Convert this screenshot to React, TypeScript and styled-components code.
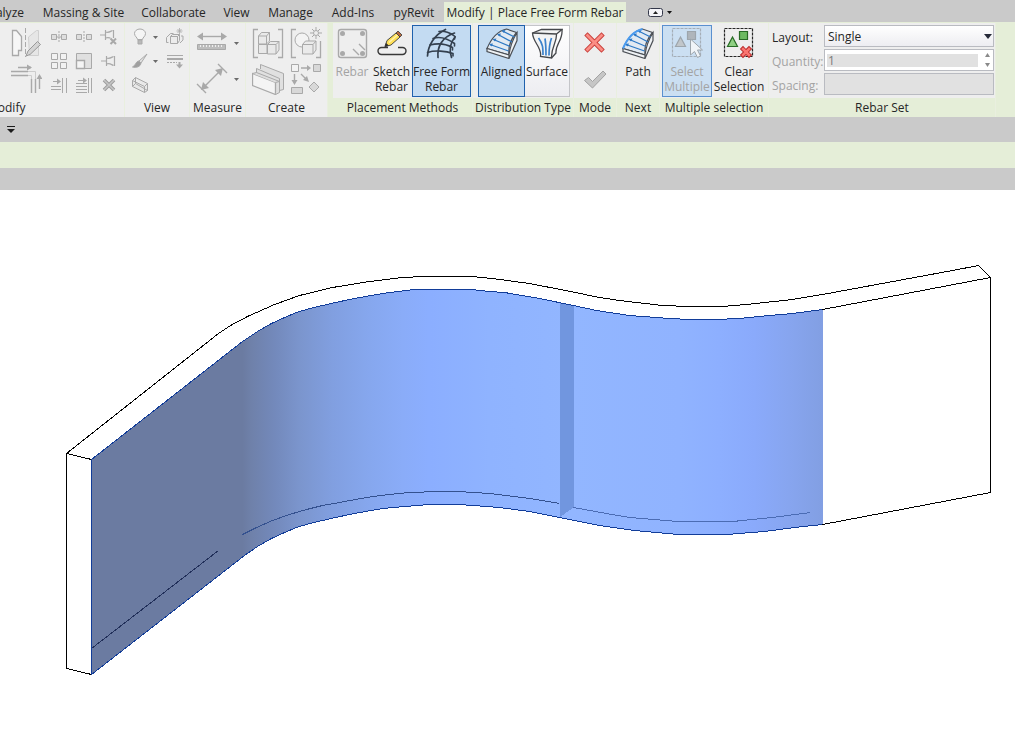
import React from "react";
import styled, { createGlobalStyle, css } from "styled-components";

const GlobalStyle = createGlobalStyle`
  *, *::before, *::after { box-sizing: border-box; }
  body {
    margin: 0;
    background: #ffffff;
    color: #262626;
    font: 12px/15px "Open Sans", "Noto Sans", sans-serif;
  }
  button, input, select { font: inherit; color: inherit; margin: 0; }
`;

const Page = styled.div`
  min-width: 1000px;
  overflow: hidden;
`;

/* ---------- tab strip ---------- */

const TabBar = styled.nav`
  display: flex;
  align-items: flex-end;
  height: 22px;
  background: #cacaca;
  overflow: hidden;
`;

const Tab = styled.button<{ $width: number; $active?: boolean; $clipped?: boolean }>`
  display: flex;
  flex: none;
  align-items: center;
  justify-content: ${(p) => (p.$clipped ? "flex-end" : "center")};
  width: ${(p) => p.$width}px;
  height: 20px;
  padding: ${(p) => (p.$clipped ? "0 10px 0 0" : "0")};
  border: 0;
  background: ${(p) => (p.$active ? "#e5eed8" : "transparent")};
  white-space: nowrap;
`;

const RibbonToggle = styled.button`
  display: flex;
  align-items: center;
  gap: 4px;
  height: 20px;
  margin-left: 22px;
  padding: 0;
  border: 0;
  background: transparent;
`;

/* ---------- ribbon ---------- */

const Ribbon = styled.div`
  display: flex;
  height: 95px;
  padding-top: 1px;
  background: #e5eed8;
  overflow: hidden;
`;

const Panel = styled.section<{ $width: number; $plain?: boolean }>`
  display: flex;
  flex: none;
  flex-direction: column;
  width: ${(p) => p.$width}px;
  border-right: 1px solid #e9efdf;
  background: ${(p) => (p.$plain ? "#eeeeee" : "transparent")};
  overflow: hidden;
`;

const PanelBody = styled.div<{ $pad?: number }>`
  display: flex;
  gap: 4px;
  height: 75px;
  padding: 2px 0 0 ${(p) => p.$pad ?? 0}px;
  background: #eeeeee;
`;

const ButtonRow = styled.div`
  display: flex;
`;

const PanelTitle = styled.h2<{ $clipped?: boolean }>`
  display: flex;
  justify-content: ${(p) => (p.$clipped ? "flex-start" : "center")};
  margin: 0;
  padding-top: 1px;
  font-size: 12px;
  font-weight: 400;
  line-height: 17px;
  white-space: nowrap;
  ${(p) => p.$clipped && css`margin-left: -13px;`}
`;

const Spacer = styled.div`
  flex: none;
  width: 5px;
`;

const IconGrid = styled.div<{ $cols: string; $row: number; $gap?: number }>`
  display: grid;
  grid-template-columns: ${(p) => p.$cols};
  grid-auto-rows: ${(p) => p.$row}px;
  column-gap: ${(p) => p.$gap ?? 0}px;
  height: 72px;
`;

const IconButton = styled.button`
  display: flex;
  align-items: center;
  justify-content: center;
  padding: 0;
  border: 0;
  background: transparent;
  &:disabled { color: #a9a9a9; }
`;

type Tone = "selected" | "raised" | "held" | "flat";

const tones = {
  flat: css`border-color: transparent;`,
  selected: css`border-color: #1f61ad; background: #c3dbf2;`,
  raised: css`border-color: #c4c5c9; background: linear-gradient(#ffffff, #ededf1); border-left: 0;`,
  held: css`border-color: #5a90cf; background: #cbdff2;`,
};

const BigButton = styled.button<{ $width: number; $tone?: Tone }>`
  display: flex;
  flex: none;
  flex-direction: column;
  align-items: center;
  width: ${(p) => p.$width}px;
  height: 72px;
  padding: 1px 0 0;
  border: 1px solid;
  background: transparent;
  color: #262626;
  ${(p) => tones[p.$tone ?? "flat"]}
  &:disabled { color: #a3a3a3; }
  svg { flex: none; margin-bottom: 5px; }
`;

const ButtonLabel = styled.span`
  display: block;
  white-space: pre;
`;

/* ---------- rebar set form ---------- */

const Form = styled.form`
  display: grid;
  grid-template-columns: 52px 170px;
  grid-auto-rows: 22px;
  row-gap: 2px;
  align-items: center;
`;

const FieldLabel = styled.label<{ $off?: boolean }>`
  padding-top: 2px;
  color: ${(p) => (p.$off ? "#a3a3a3" : "#262626")};
`;

const SelectBox = styled.span`
  display: grid;
  align-items: center;
  height: 22px;
  border: 1px solid #b9bbc1;
  background: linear-gradient(#ffffff, #ededf1);
  > * { grid-area: 1 / 1; }
  > svg { justify-self: end; margin-right: 1px; pointer-events: none; }
`;

const Select = styled.select`
  width: 100%;
  height: 20px;
  padding: 0 0 0 3px;
  border: 0;
  background: transparent;
  appearance: none;
`;

const NumberBox = styled.span`
  display: flex;
  align-items: center;
  height: 22px;
  padding-left: 2px;
  border: 1px solid #b9bbc1;
  background: #ffffff;
`;

const NumberInput = styled.input`
  flex: 1;
  min-width: 0;
  height: 13px;
  padding: 0 1px;
  border: 0;
  background: #e1e1e1;
  color: #7b7b7b;
`;

const Spinner = styled.span`
  display: flex;
  flex-direction: column;
  align-items: center;
  width: 15px;
  padding-left: 3px;
  button { display: flex; padding: 3px 2px; border: 0; background: transparent; }
`;

const SpacingInput = styled.input`
  width: 100%;
  height: 22px;
  border: 1px solid #b9bbc1;
  background: #e1e1e1;
`;

/* ---------- bars below the ribbon ---------- */

const QuickBar = styled.div`
  display: flex;
  align-items: center;
  height: 25px;
  padding-left: 5px;
  background: #cacaca;
`;

const OptionsBar = styled.div`
  height: 26px;
  background: #e5eed8;
`;

const ViewBar = styled.div`
  height: 22px;
  background: #cacaca;
`;

const Viewport = styled.main`
  svg { display: block; width: 100%; height: auto; }
`;

/* ---------- icons ---------- */

const Small: React.FC<{ children: React.ReactNode }> = ({ children }) => (
  <svg width="18" height="18" viewBox="0 0 18 18" fill="none" stroke="#a9a9a9">{children}</svg>
);
const Large: React.FC<{ children: React.ReactNode; stroke?: string }> = ({ children, stroke = "#a9a9a9" }) => (
  <svg width="32" height="32" viewBox="0 0 32 32" fill="none" stroke={stroke}>{children}</svg>
);
const Caret: React.FC<{ color?: string; w?: number }> = ({ color = "#6b6b6b", w = 5 }) => (
  <svg width={w} height={w === 5 ? 3 : 5} viewBox="0 0 5 3"><path d="M0 0h5L2.5 3z" fill={color} /></svg>
);

const MirrorIcon = () => (
  <Large>
    <path d="M2.500 3.500h4l5 6v14h-3v5h-6z" fill="#f6f6f6" strokeWidth="1.300" />
    <path d="M15.500 1v29" strokeDasharray="5 2" />
    <path d="M18.500 10l8-6.500h2v25h-9z" fill="#e6e6e6" stroke="#cfcfcf" />
    <path d="M16 29l2-5L27.500 14.500l3 3L20 27.500z" fill="#d4d4d4" stroke="#989898" />
  </Large>
);
const TrimIcon = () => (
  <Large>
    <path d="M1 8.500h17M1 12.500h17M21.500 16v14M25.500 16v14" strokeWidth="1.400" />
    <path d="M18 8.500h7.500V16M18 12.500h3.500V16" stroke="#cccccc" />
    <path d="M8 4.500h13M29.500 26V13" strokeWidth="1.400" />
    <path d="M17 1.500l5 3-5 3zM26.500 16l3-5 3 5z" fill="#a9a9a9" stroke="none" />
  </Large>
);
const SplitIcon = () => (
  <Small><path d="M1.500 6.500h5v5h-5zM11.500 6.500h5v5h-5z" fill="#dedede" /><path d="M6 9h6" /><path d="M9 3v12" strokeDasharray="2 1" /></Small>
);
const SplitGapIcon = () => (
  <Small><path d="M1.500 6.500h5v5h-5zM11.500 6.500h5v5h-5z" fill="#dedede" /><path d="M9 3v12" strokeDasharray="2 1" /></Small>
);
const PinIcon = () => (
  <Small><path d="M1 9h5M6.500 4v10M6.500 6c3 1 4 0 7-1.500M6.500 12c3-1 4 0 7 1.500M14.500 4v10" strokeWidth="1.200" /></Small>
);
const UnpinIcon = () => (
  <Small>
    <path d="M0 7h5M5.500 2v10M5.500 4c3 1 4 0 7-1.500M5.500 10c3-1 4 0 5 0M13.500 2v8" strokeWidth="1.200" />
    <path d="M10.500 10.500l5.500 5.500M16 10.500l-5.500 5.500" strokeWidth="2" />
  </Small>
);
const ArrayIcon = () => (
  <Small><path d="M1.500 1.500h6v6h-6zM10.500 1.500h6v6h-6zM1.500 10.500h6v6h-6zM10.500 10.500h6v6h-6z" fill="#f2f2f2" /></Small>
);
const ScaleIcon = () => (
  <Small><path d="M1.500 1.500h15v15h-15z" fill="#e0e0e0" /><path d="M1.500 8.500h8v8h-8z" fill="#f5f5f5" strokeWidth="1.400" /></Small>
);
const ExtendIcon = () => (
  <Small><path d="M1 10.500h10M1 13.500h10M12.500 2v15M16.500 2v15" /><path d="M3 5.500h6" /><path d="M7 2.500l4 3-4 3z" fill="#a9a9a9" stroke="none" /></Small>
);
const ExtendMultiIcon = () => (
  <Small><path d="M1 7.500h11M1 10.500h11M1 13.500h11M1 16.500h11M13.500 2v15M16.500 2v15" /><path d="M3 4.500h6" /><path d="M8 1.500l4 3-4 3z" fill="#a9a9a9" stroke="none" /></Small>
);
const DeleteIcon = () => (
  <Small><path d="M4 4l10 10M14 4L4 14" stroke="#9c9c9c" strokeWidth="3.600" /><path d="M4 4l10 10M14 4L4 14" stroke="#c6c6c6" strokeWidth="1.600" /></Small>
);
const BulbIcon = () => (
  <Small><path d="M6.500 11.500C6.500 9.500 3.500 8.500 3.500 5.500a5.500 4.500 0 0 1 11 0c0 3-3 4-3 6z" fill="#f5f5f5" /><path d="M7 12h4v4H7z" fill="#b9b9b9" /></Small>
);
const BrushIcon = () => (
  <Small><path d="M16 2L8 9l2 2z" fill="#e4e4e4" /><path d="M8 9c-3 0-3 4-6.500 6 3.500 1 8 0 8.500-4z" fill="#9f9f9f" /></Small>
);
const DisplaceIcon = () => (
  <Small><path d="M.5 9.500l4-4h3M.5 9.500v5h2M4.500 8.500h7v7h-7zM4.500 8.500l2-2h7l-2 2M13.500 6.500v6l-2 3M15 8h2v4l-3 3" fill="#ececec" /><path d="M13.500 0v6M10.500 3h6M11.500 1l4 4M15.500 1l-4 4" strokeWidth=".8" /></Small>
);
const LinesIcon = () => (
  <Small><path d="M1 3.500h16" /><path d="M1 7h16" strokeWidth="2" /><path d="M1 10.500h10" strokeDasharray="2 1" /><path d="M13.500 10v3" strokeWidth="2" /><path d="M10 12.500h7L13.500 16.500z" fill="#a9a9a9" stroke="none" /></Small>
);
const BoxIcon = () => (
  <Small><path d="M1.500 4.500l3-3 12 6v7l-3 2-12-6zM1.500 4.500l12 6v6M13.500 10.500l3-3M4.500 1.500v6l12 7M1.500 10.500l3-3" fill="#e8e8e8" /></Small>
);
const MeasureIcon = () => (
  <Large>
    <path d="M4 9.500h24" strokeWidth="1.400" /><path d="M7 5.500v8l-6-4zM25 5.500v8l6-4z" fill="#a9a9a9" stroke="none" />
    <path d="M1.500 17.500h28v5h-28z" fill="#bdbdbd" /><path d="M4.500 18v2M7.500 18v2M10.500 18v2M13.500 18v2M16.500 18v2M19.500 18v2M22.500 18v2M25.500 18v2" stroke="#eeeeee" />
  </Large>
);
const DimensionIcon = () => (
  <Large>
    <path d="M7 25L25 7M1 21l9 9M22 1l9 9" strokeWidth="1.400" /><path d="M5 27l2-8 6 6zM27 5l-8 2 6 6z" fill="#a9a9a9" stroke="none" />
  </Large>
);
const GroupIcon = () => (
  <Large>
    <path d="M6 2.500H1.500v28H6M26 2.500h4.500v28H26" strokeWidth="1.300" />
    <path d="M6.500 9l3-3.500h8V14l-3 3h-8zM6.500 9h8v8M14.500 9l3-3.500M6.500 17.500h8.500v9H6.500zM15.500 17.500l3-3h8.500v8.500l-3 4h-8.500zM15.500 17.500H24V27M24 17.500l3-3" fill="#e9e9e9" />
  </Large>
);
const SimilarIcon = () => (
  <Large>
    <path d="M6 2.500H1.500v28H6M26 30.500h4.500V14" strokeWidth="1.300" />
    <circle cx="12" cy="13" r="7" fill="#f3f3f3" />
    <path d="M12.500 17.500l3-3.500h10.500v9l-3 4H12.500zM12.500 17.500H23V27M23 17.500l3-3.500" fill="#eaeaea" />
    <circle cx="26" cy="6" r="2.500" /><path d="M26 0v3M26 9v3M20 6h3M29 6h3M22 2l2 2M30 10l-2-2M30 2l-2 2M22 10l2-2" />
  </Large>
);
const SheetsIcon = () => (
  <Large>
    <path d="M8.500 6V1.500l23 9v16l-4 1M4.500 10V5.500l23 10V28l-3 1" fill="#e0e0e0" />
    <path d="M.5 10.500l23 9v12l-23-9z" fill="#f4f4f4" strokeWidth="1.300" /><path d="M.5 10.500l4-1 23 9-4 1M23.500 31.500l4-2v-11" fill="#dedede" />
  </Large>
);
const ConvertIcon = () => (
  <Large>
    <path d="M1.500 1.500h7v7h-7z" fill="#f2f2f2" /><path d="M23.500 1.500h7v7h-7zM1.500 24.500h11v6h-11zM24 19l5 5-5 5-5-5z" fill="#d8d8d8" />
    <path d="M11 5h7M4.500 11v7M11 11l5 5" strokeWidth="1.400" /><path d="M17 2l4 3-4 3zM1.500 17l3 5 3-5zM19 19l-2-6-4 4z" fill="#a9a9a9" stroke="none" />
  </Large>
);
const RebarIcon = () => (
  <Large>
    <rect x="2.500" y="2.500" width="28" height="28" rx="2.500" strokeWidth="1.400" />
    <g fill="#a9a9a9" stroke="none"><circle cx="6.500" cy="6.500" r="2.500" /><circle cx="26.500" cy="6.500" r="2.500" /><circle cx="6.500" cy="26.500" r="2.500" /><circle cx="26.500" cy="26.500" r="2.500" /></g>
    <path d="M17 22l6 6M23 17l6 6" strokeWidth="1.400" />
  </Large>
);
const SketchIcon = () => (
  <Large stroke="#383838">
    <path d="M12 20.500H5.500a3.500 3.500 0 0 0 0 7h21a3.500 3.500 0 0 0 0-7H22" strokeWidth="1.400" />
    <path d="M9 19.500l2-6L20 6l4 4-9 8z" fill="#ffdf55" strokeWidth=".9" />
    <path d="M13 15.500l9-8" stroke="#fff3ac" strokeWidth="1.500" /><path d="M20 6l2-2 4 4-2 2z" fill="#b8693d" strokeWidth=".8" /><path d="M9 19.500l1.200-3 2 2z" fill="#222" />
  </Large>
);
const FreeFormIcon = () => (
  <Large stroke="#34404f">
    <g strokeWidth="1.700" strokeLinecap="round">
      <path d="M1.500 29C2 19 8 8 19.500 2.500M12 30.500C11 20 16 10 28.500 6M25.500 30.500C23 23 24 16 29 10" />
      <path d="M13 4.500C18 3.500 25 6 29 9.500L28.500 12M7 11.500C14 9 22 12 28.500 16.500V19M4 18C12 16 20 17 26.500 20.500V23M1.500 25.500C9 23 20 24 27 26.500V29" strokeWidth="1.600" />
    </g>
  </Large>
);
const FanIcon: React.FC<{ path?: boolean }> = ({ path }) => (
  <Large stroke="#4b4f55">
    <path d="M1 21.500C5 12 12 4 20.500 2L30.500 5.500C25 12 22 20 23 28z" fill="#e2eaf2" strokeWidth="1.200" />
    <path d="M1 21.500V24.500L23 31.500V28zM23 31.500L31 13.500V5.500C27 12 24 20 23 28z" fill="#eef1f4" strokeWidth="1.200" />
    <path d="M4 17.500L22.500 24M7.500 12.500L24 19.500M12 7.500L26 15M16.500 4L28.500 10" stroke="#2d78c4" strokeWidth="1.300" />
    <path d="M3 17l4-.5-1.500 3zM6.500 12l4-.5-1.500 3zM11 7l4-.5-1.500 3zM15.500 3.500l4-.5-1.500 3z" fill="#2d78c4" stroke="none" />
    {path && <path d="M1 21.500C5 12 12 4 20.500 2" stroke="#4c9cf0" strokeWidth="2" />}
  </Large>
);
const SurfaceIcon = () => (
  <Large stroke="#45474b">
    <path d="M1.500 6L10.500 2.500H31L25.500 7C26 16 20 20 20.500 31L9.500 29.500C11 20 2 16 1.500 6z" fill="#f3f4f5" strokeWidth="1.300" />
    <path d="M1.500 6L25.500 7M31 2.500C32 13 24 18 25 26L20.500 31" strokeWidth="1.300" />
    <path d="M7.500 11C12 17 12 21 12 28M14 11.500C15 18 15 22 15 28.500M20.500 11C18 18 18 22 18 28.500" stroke="#3c82cb" strokeWidth="1.700" />
  </Large>
);
const CancelIcon = () => (
  <svg width="24" height="24" viewBox="0 0 24 24" fill="none" strokeLinecap="square">
    <path d="M4.500 4.500l14 14M18.500 4.500l-14 14" stroke="#c93e3a" strokeWidth="4.600" /><path d="M4.500 4.500l14 14M18.500 4.500l-14 14" stroke="#fb8d85" strokeWidth="2.800" />
  </svg>
);
const FinishIcon = () => (
  <svg width="24" height="24" viewBox="0 0 24 24"><path d="M1.500 13.500l4-3 4 4L20 4l3 3L9.500 21z" fill="#c6c6c6" stroke="#a2a2a2" /></svg>
);
const SelectionIcon: React.FC<{ off?: boolean }> = ({ off }) => (
  <Large stroke={off ? "#a5aeb7" : "#262626"}>
    <rect x="1.500" y="1.500" width="28" height="28" strokeDasharray="3 1" strokeWidth="1.200" />
    <path d="M9.500 10l5 9.500h-10z" fill={off ? "#c1c6ca" : "#8ed082"} stroke={off ? "#9da5ac" : "#286a25"} strokeWidth="1.200" />
    <path d="M16.500 4.500h8v8h-8z" fill={off ? "#afb5bb" : "#6cba61"} stroke={off ? "#9da5ac" : "#286a25"} strokeWidth="1.200" />
    {off
      ? <path d="M19.500 12v16l4-3.500 3 6 3-1.500-3-6h5z" fill="#f0f4f8" stroke="#9da5ac" />
      : <><path d="M20 22l6 6M26 22l-6 6" stroke="#b92828" strokeWidth="4.500" strokeLinecap="square" /><path d="M20 22l6 6M26 22l-6 6" stroke="#fa7570" strokeWidth="2.600" strokeLinecap="square" /></>}
  </Large>
);

/* ---------- wall drawing ---------- */

const outerTop = "67,453 219,333 231,325 248,316 275,304 300,295 333,287 370,281 403,277 425,276 472,276 493,278 530,283 571,291 600,297 620,300 663,305 690,306 722,306 747,304 793,299 823,294 953,270 979,265 991,277";
const faceTop = "92,459 243,341 258,331 272,323 285,317 297,312 310,308 323,305 336,302 350,299 366,296 383,293 399,291 415,289 472,289 490,291 505,292 540,298 574,305 597,310 630,315 670,318 690,319 715,319 740,318 770,315 793,313 823,309";
const faceBottom = "92,674 245,555 258,546 272,538 285,532 297,527 310,523 323,520 336,517 350,514 366,511 383,508 405,506 430,504 460,504 500,507 530,511 560,517 600,525 635,530 679,534 727,534 765,531 795,527 823,524";
const innerArc = "243,534 257,527 273,520 290,514 307,509 323,505 340,502 356,499 373,496 390,494 410,492 440,491 458,491 490,493 530,498 560,503";
const innerArcRight = "574,507 607,513 630,517 679,521 733,521 773,517 811,512";
const facePolygon = `${faceTop} ${faceBottom.split(" ").reverse().join(" ")}`;

const shading: [number, string][] = [
  [92, "#6b7ba1"], [243, "#6b7ba1"], [252, "#6f81aa"], [275, "#7389bb"], [300, "#7b95cd"],
  [333, "#819fe0"], [370, "#86a7ee"], [403, "#8aacf8"], [430, "#8baeff"], [490, "#8fb3ff"],
  [574, "#92b6ff"], [680, "#90b3ff"], [720, "#8dafff"], [755, "#8aaafb"], [790, "#87a5ef"], [823, "#829fe3"],
];

const WallDrawing = () => (
  <svg viewBox="0 190 1015 559" role="img" aria-label="Curved wall, 3D view">
    <defs>
      <linearGradient id="face" gradientUnits="userSpaceOnUse" x1="92" y1="0" x2="823" y2="0">
        {shading.map(([x, color]) => <stop key={x} offset={(x - 92) / 731} stopColor={color} />)}
      </linearGradient>
    </defs>
    <g fill="none" shapeRendering="crispEdges" transform="translate(-.5 .5)">
      <polygon points={facePolygon} fill="url(#face)" />
      <path d="M560 302L574 305V507L560 517z" fill="#7196df" />
      <g stroke="#000000">
        <polyline points={outerTop} />
        <path d="M92 459L67 453V668L92 674M823 309L991 277V492L823 524" />
      </g>
      <path d="M92 648L219 550" stroke="#22305a" />
      <polyline points={innerArc} stroke="#34518f" />
      <polyline points={innerArcRight} stroke="#4b6cb4" />
      <g stroke="#123d99">
        <polyline points={faceTop} />
        <polyline points={faceBottom} />
        <path d="M92 459V674" />
      </g>
    </g>
  </svg>
);

const Tool: React.FC<{ name: string; children: React.ReactNode }> = ({ name, children }) => (
  <IconButton type="button" disabled aria-label={name}>{children}</IconButton>
);

export default function App() {
  return (
    <Page>
      <GlobalStyle />
      <TabBar aria-label="Ribbon tabs">
        <Tab $width={34} $clipped>Analyze</Tab>
        <Tab $width={99}>Massing &amp; Site</Tab>
        <Tab $width={81}>Collaborate</Tab>
        <Tab $width={45}>View</Tab>
        <Tab $width={63}>Manage</Tab>
        <Tab $width={62}>Add-Ins</Tab>
        <Tab $width={60}>pyRevit</Tab>
        <Tab $width={182} $active>Modify | Place Free Form Rebar</Tab>
        <RibbonToggle aria-label="Minimize ribbon">
          <svg width="15" height="9" viewBox="0 0 15 9"><rect x=".5" y=".5" width="14" height="8" rx="2" fill="#f4f4f8" stroke="#34384a" /><path d="M5 6h5L7.500 3z" fill="#222" /></svg>
          <Caret color="#111" />
        </RibbonToggle>
      </TabBar>

      <Ribbon>
        <Panel $width={125} $plain>
          <PanelBody $pad={10}>
            <IconGrid $cols="32px" $row={36}>
              <Tool name="Mirror"><MirrorIcon /></Tool>
              <Tool name="Trim to corner"><TrimIcon /></Tool>
            </IconGrid>
            <IconGrid $cols="26px 24px 26px" $row={24}>
              <Tool name="Split element"><SplitIcon /></Tool>
              <Tool name="Split with gap"><SplitGapIcon /></Tool>
              <Tool name="Unpin"><UnpinIcon /></Tool>
              <Tool name="Array"><ArrayIcon /></Tool>
              <Tool name="Scale"><ScaleIcon /></Tool>
              <Tool name="Pin"><PinIcon /></Tool>
              <Tool name="Extend single"><ExtendIcon /></Tool>
              <Tool name="Extend multiple"><ExtendMultiIcon /></Tool>
              <Tool name="Delete"><DeleteIcon /></Tool>
            </IconGrid>
          </PanelBody>
          <PanelTitle $clipped>Modify</PanelTitle>
        </Panel>
        <Panel $width={65} $plain>
          <PanelBody $pad={6}>
            <IconGrid $cols="18px 13px 26px" $row={24}>
              <Tool name="Hide in view"><BulbIcon /></Tool>
              <Tool name="Hide options"><Caret /></Tool>
              <Tool name="Displace elements"><DisplaceIcon /></Tool>
              <Tool name="Override graphics"><BrushIcon /></Tool>
              <Tool name="Override options"><Caret /></Tool>
              <Tool name="Linework"><LinesIcon /></Tool>
              <Tool name="Selection box"><BoxIcon /></Tool>
            </IconGrid>
          </PanelBody>
          <PanelTitle>View</PanelTitle>
        </Panel>
        <Panel $width={56} $plain>
          <PanelBody $pad={6}>
            <IconGrid $cols="32px 16px" $row={36}>
              <Tool name="Measure between"><MeasureIcon /></Tool>
              <Tool name="Measure options"><Caret /></Tool>
              <Tool name="Aligned dimension"><DimensionIcon /></Tool>
              <Tool name="Dimension options"><Caret /></Tool>
            </IconGrid>
          </PanelBody>
          <PanelTitle>Measure</PanelTitle>
        </Panel>
        <Panel $width={82} $plain>
          <PanelBody $pad={6}>
            <IconGrid $cols="32px 32px" $row={36} $gap={6}>
              <Tool name="Create group"><GroupIcon /></Tool>
              <Tool name="Create similar"><SimilarIcon /></Tool>
              <Tool name="Create assembly"><SheetsIcon /></Tool>
              <Tool name="Create parts"><ConvertIcon /></Tool>
            </IconGrid>
          </PanelBody>
          <PanelTitle>Create</PanelTitle>
        </Panel>
        <Spacer />
        <Panel $width={140}>
          <PanelBody>
            <ButtonRow>
              <BigButton $width={38} disabled><RebarIcon /><ButtonLabel>Rebar</ButtonLabel></BigButton>
              <BigButton $width={41}><SketchIcon /><ButtonLabel>{"Sketch\nRebar"}</ButtonLabel></BigButton>
              <BigButton $width={59} $tone="selected"><FreeFormIcon /><ButtonLabel>{"Free Form\nRebar"}</ButtonLabel></BigButton>
            </ButtonRow>
          </PanelBody>
          <PanelTitle>Placement Methods</PanelTitle>
        </Panel>
        <Panel $width={101}>
          <PanelBody $pad={5}>
            <ButtonRow>
              <BigButton $width={47} $tone="selected"><FanIcon /><ButtonLabel>Aligned</ButtonLabel></BigButton>
              <BigButton $width={45} $tone="raised"><SurfaceIcon /><ButtonLabel>Surface</ButtonLabel></BigButton>
            </ButtonRow>
          </PanelBody>
          <PanelTitle>Distribution Type</PanelTitle>
        </Panel>
        <Panel $width={43}>
          <PanelBody>
            <IconGrid $cols="42px" $row={36}>
              <IconButton type="button" aria-label="Cancel"><CancelIcon /></IconButton>
              <IconButton type="button" aria-label="Finish" disabled><FinishIcon /></IconButton>
            </IconGrid>
          </PanelBody>
          <PanelTitle>Mode</PanelTitle>
        </Panel>
        <Panel $width={43}>
          <PanelBody>
            <BigButton $width={42}><FanIcon path /><ButtonLabel>Path</ButtonLabel></BigButton>
          </PanelBody>
          <PanelTitle>Next</PanelTitle>
        </Panel>
        <Panel $width={109}>
          <PanelBody $pad={2}>
            <ButtonRow>
              <BigButton $width={50} $tone="held" disabled><SelectionIcon off /><ButtonLabel>{"Select\nMultiple"}</ButtonLabel></BigButton>
              <BigButton $width={54}><SelectionIcon /><ButtonLabel>{"Clear\nSelection"}</ButtonLabel></BigButton>
            </ButtonRow>
          </PanelBody>
          <PanelTitle>Multiple selection</PanelTitle>
        </Panel>
        <Panel $width={227}>
          <PanelBody $pad={3}>
            <Form onSubmit={(e) => e.preventDefault()}>
              <FieldLabel htmlFor="layout">Layout:</FieldLabel>
              <SelectBox>
                <Select id="layout" defaultValue="Single"><option>Single</option></Select>
                <Caret color="#262a38" w={8} />
              </SelectBox>
              <FieldLabel htmlFor="quantity" $off>Quantity:</FieldLabel>
              <NumberBox>
                <NumberInput id="quantity" type="text" inputMode="numeric" defaultValue="1" disabled />
                <Spinner>
                  <button type="button" aria-label="Increase" disabled><svg width="5" height="4" viewBox="0 0 5 4"><path d="M0 4h5L2.500 0z" fill="#8a8a8a" /></svg></button>
                  <button type="button" aria-label="Decrease" disabled><svg width="5" height="4" viewBox="0 0 5 4"><path d="M0 0h5L2.500 4z" fill="#8a8a8a" /></svg></button>
                </Spinner>
              </NumberBox>
              <FieldLabel htmlFor="spacing" $off>Spacing:</FieldLabel>
              <SpacingInput id="spacing" type="text" disabled />
            </Form>
          </PanelBody>
          <PanelTitle>Rebar Set</PanelTitle>
        </Panel>
      </Ribbon>

      <QuickBar>
        <IconButton type="button" aria-label="Customize quick access toolbar">
          <svg width="11" height="7" viewBox="0 0 11 7"><path d="M2 0h8v1H2zM2 3h8L6 7z" fill="#1c1c1c" /></svg>
        </IconButton>
      </QuickBar>
      <OptionsBar />
      <ViewBar />
      <Viewport><WallDrawing /></Viewport>
    </Page>
  );
}
